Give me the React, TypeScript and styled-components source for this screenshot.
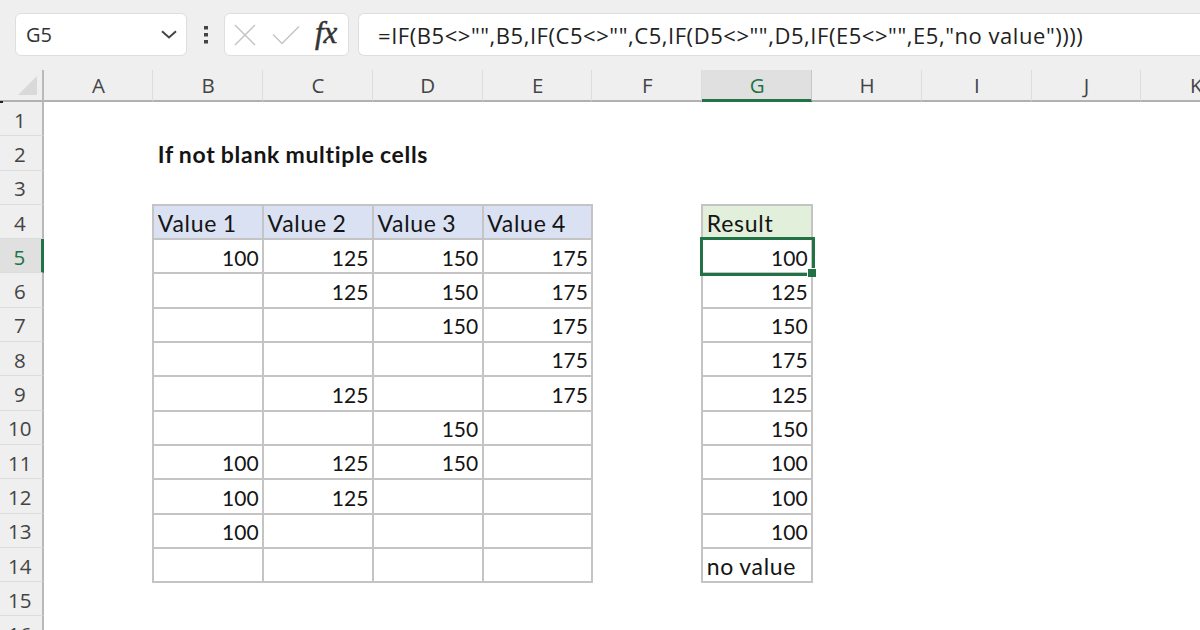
import React from "react";
import styled, { createGlobalStyle } from "styled-components";

const Global = createGlobalStyle`
  html, body { margin: 0; padding: 0; background: #fff; }
  body { width: 1200px; height: 630px; overflow: hidden; }
`;

const Page = styled.div`
  position: relative;
  width: 1200px;
  height: 630px;
  overflow: hidden;
  background: #fff;
  display: flex;
  flex-direction: column;
`;

const Toolbar = styled.div`
  height: 70px;
  flex: none;
  box-sizing: border-box;
  padding-top: 13px;
  background: #efefef;
  display: flex;
  align-items: flex-start;
`;

const Box = styled.div<{ $w?: number; $grow?: boolean }>`
  box-sizing: border-box;
  height: 43px;
  background: #fff;
  border: 1px solid #dedede;
  border-radius: 6px;
  display: flex;
  align-items: center;
  ${(p) => (p.$w ? `width: ${p.$w}px; flex: none;` : "")}
  ${(p) => (p.$grow ? "flex: 1; border-radius: 6px 0 0 6px; border-right: none;" : "")}
`;

const NameBox = styled(Box)`
  margin-left: 15px;
  padding: 0 9px 0 10px;
  justify-content: space-between;
  font: 400 20px "Open Sans", sans-serif;
  color: #333;
`;

const Dots = styled.svg`
  width: 6px;
  height: 18px;
  margin: 13px 15px 0 16px;
  flex: none;
`;

const FxBox = styled(Box)`
  padding: 0 7px 0 9px;
  gap: 16px;
  margin-right: 9px;
`;

const Fx = styled.span`
  font: italic 400 31px "Liberation Serif", serif;
  color: #333;
  -webkit-text-stroke: 0.5px #333;
  line-height: 1;
  margin: -5px 0 0 -1px;
`;

const Formula = styled(Box)`
  padding-left: 19px;
  font: 400 22px "Open Sans", sans-serif;
  letter-spacing: 0.55px;
  color: #222;
  white-space: nowrap;
`;

const Sheet = styled.div`
  display: grid;
  grid-template-columns: 43.5px repeat(11, 109.8px);
  grid-template-rows: 32px repeat(16, 34.3px);
  flex: none;
`;

const Corner = styled.div`
  background: #efefef;
  border-right: 2px solid #b9b9b9;
  border-bottom: 2px solid #b1b1b1;
  box-sizing: border-box;
  display: flex;
  padding: 6px 0 0 18px;
`;

const CornerMark = styled.svg`
  width: 19px;
  height: 19px;
`;

const ColHead = styled.div<{ $active?: boolean }>`
  box-sizing: border-box;
  background: ${(p) => (p.$active ? "#e0e0e0" : "#efefef")};
  border-right: 1.5px solid ${(p) => (p.$active ? "#c6c6c6" : "#dcdcdc")};
  border-bottom: ${(p) => (p.$active ? "3px solid #217346" : "2px solid #b1b1b1")};
  color: ${(p) => (p.$active ? "#217346" : "#444")};
  font: 400 20.5px "Open Sans", sans-serif;
  display: flex;
  align-items: center;
  justify-content: center;
  padding-left: 1px;
`;

const RowHead = styled.div<{ $active?: boolean }>`
  box-sizing: border-box;
  background: ${(p) => (p.$active ? "#e0e0e0" : "#efefef")};
  border-right: ${(p) => (p.$active ? "3px solid #217346" : "2px solid #b9b9b9")};
  border-bottom: 1.5px solid #dcdcdc;
  color: ${(p) => (p.$active ? "#217346" : "#444")};
  font: 400 20.5px "Open Sans", sans-serif;
  display: flex;
  align-items: center;
  justify-content: center;
  padding: 2px 2px 0 0;
`;

const Cell = styled.div<{ $lined?: boolean; $right?: boolean; $fill?: string; $bold?: boolean }>`
  position: relative;
  box-sizing: border-box;
  padding: 1.5px 4.5px 0 4.5px;
  display: flex;
  align-items: center;
  justify-content: ${(p) => (p.$right ? "flex-end" : "flex-start")};
  font-family: Lato, sans-serif;
  font-weight: ${(p) => (p.$bold ? 700 : 400)};
  font-size: ${(p) => (p.$right ? "21px" : "23px")};
  letter-spacing: ${(p) => (p.$right ? "0" : "0.72px")};
  word-spacing: ${(p) => (p.$right ? "0" : "-1px")};
  color: #141414;
  white-space: nowrap;
  background: ${(p) => p.$fill ?? "transparent"};
  ${(p) => (p.$lined ? "outline: 2px solid #c4c4c4; outline-offset: -1px;" : "")}
`;

const Selection = styled.div`
  position: absolute;
  inset: -2.5px;
  border: 3px solid #217346;
  z-index: 2;
  pointer-events: none;
`;

const Handle = styled.div`
  position: absolute;
  right: -4.5px;
  bottom: -4.5px;
  width: 8px;
  height: 8px;
  background: #217346;
  border: solid #fff;
  border-width: 1px 0 0 1px;
`;

const Speck = styled.div`
  position: absolute;
  left: 0;
  top: 101px;
  width: 3px;
  height: 2px;
  background: #222;
`;

const cols = ["A", "B", "C", "D", "E", "F", "G", "H", "I", "J", "K"];
const values: Record<number, (number | null)[]> = {
  5: [100, 125, 150, 175],
  6: [null, 125, 150, 175],
  7: [null, null, 150, 175],
  8: [null, null, null, 175],
  9: [null, 125, null, 175],
  10: [null, null, 150, null],
  11: [100, 125, 150, null],
  12: [100, 125, null, null],
  13: [100, null, null, null],
  14: [null, null, null, null],
};
const results: Record<number, string> = {
  5: "100", 6: "125", 7: "150", 8: "175", 9: "125", 10: "150", 11: "100", 12: "100", 13: "100", 14: "no value",
};
const BLUE = "#d9e1f2";
const GREEN = "#e2efda";

function SheetCell({ row, col }: { row: number; col: number }) {
  if (row === 2 && col === 1) return <Cell $bold>If not blank multiple cells</Cell>;
  if (row === 4 && col >= 1 && col <= 4)
    return <Cell $lined $fill={BLUE}>{`Value ${col}`}</Cell>;
  if (row === 4 && col === 6) return <Cell $lined $fill={GREEN}>Result</Cell>;
  if (row >= 5 && row <= 14 && col >= 1 && col <= 4) {
    const v = values[row][col - 1];
    return <Cell $lined $right>{v ?? ""}</Cell>;
  }
  if (row >= 5 && row <= 14 && col === 6) {
    const text = results[row];
    return (
      <Cell $lined $right={text !== "no value"}>
        {text}
        {row === 5 && (
          <Selection>
            <Handle />
          </Selection>
        )}
      </Cell>
    );
  }
  return <Cell />;
}

export default function App() {
  const rows = Array.from({ length: 16 }, (_, i) => i + 1);
  return (
    <Page>
      <Global />
      <Toolbar>
        <NameBox $w={172}>
          <span>G5</span>
          <svg width="16" height="9" viewBox="0 0 16 9" fill="none">
            <path d="M1 1.2 8 7.5 15 1.2" stroke="#444" strokeWidth="2" />
          </svg>
        </NameBox>
        <Dots viewBox="0 0 6 18">
          <rect x="1" y="0" width="4" height="3.5" fill="#444" />
          <rect x="1" y="7" width="4" height="3.5" fill="#444" />
          <rect x="1" y="14" width="4" height="3.5" fill="#444" />
        </Dots>
        <FxBox $w={125}>
          <svg width="22" height="22" viewBox="0 0 22 22" fill="none">
            <path d="M1 1 21 21M21 1 1 21" stroke="#c4c4c4" strokeWidth="1.5" />
          </svg>
          <svg width="28" height="20" viewBox="0 0 28 20" fill="none">
            <path d="M1 9.5 10 18.5 27 1.5" stroke="#c4c4c4" strokeWidth="1.5" />
          </svg>
          <Fx>fx</Fx>
        </FxBox>
        <Formula $grow>{'=IF(B5<>"",B5,IF(C5<>"",C5,IF(D5<>"",D5,IF(E5<>"",E5,"no value"))))'}</Formula>
      </Toolbar>
      <Sheet>
        <Corner>
          <CornerMark viewBox="0 0 19 19">
            <path d="M19 0V19H0Z" fill="#d9d9d9" />
          </CornerMark>
        </Corner>
        {cols.map((c) => (
          <ColHead key={c} $active={c === "G"}>{c}</ColHead>
        ))}
        {rows.map((r) => (
          <React.Fragment key={r}>
            <RowHead $active={r === 5}>{r}</RowHead>
            {cols.map((c, i) => (
              <SheetCell key={c} row={r} col={i} />
            ))}
          </React.Fragment>
        ))}
      </Sheet>
      <Speck />
    </Page>
  );
}
